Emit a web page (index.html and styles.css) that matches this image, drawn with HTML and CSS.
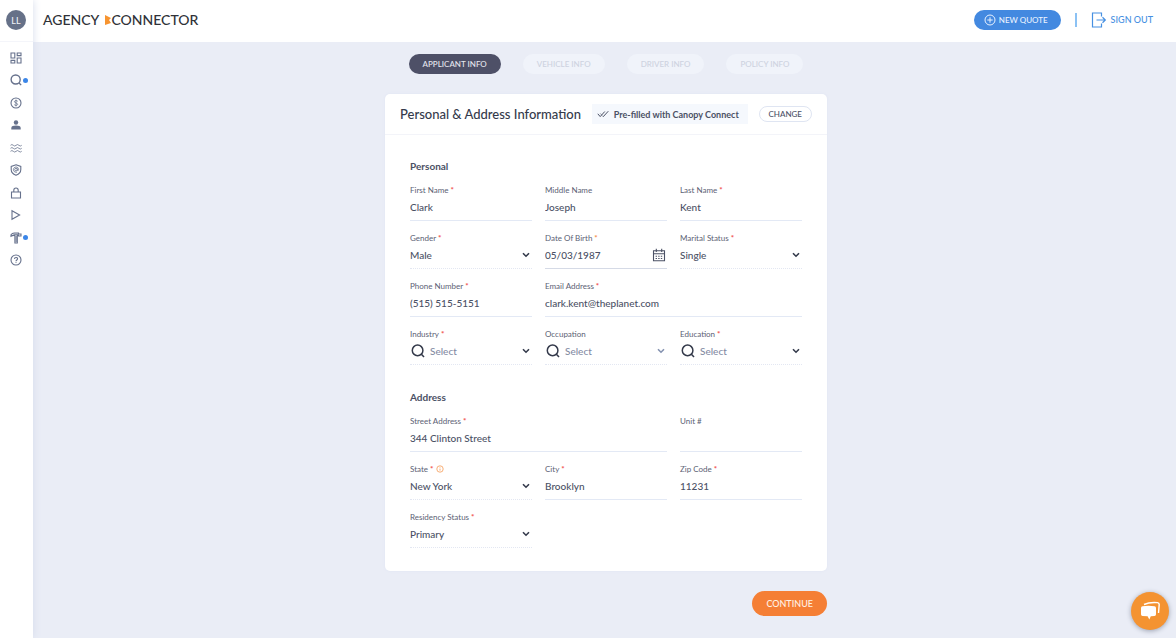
FILE: index.html
```html
<!DOCTYPE html>
<html lang="en">
<head>
<meta charset="utf-8">
<meta name="viewport" content="width=device-width, initial-scale=1">
<title>Agency Connector</title>
<link rel="stylesheet" href="styles.css">
</head>
<body>
<svg class="sprite" aria-hidden="true">
  <symbol id="search" viewBox="0 0 14 14"><circle cx="6.6" cy="6.4" r="5.3"/><path d="M10.4 10.2 13 13"/></symbol>
  <symbol id="chevron" viewBox="0 0 8 6"><path d="M1 1.2 4 4.2 7 1.2"/></symbol>
</svg>
<div class="app">
  <aside class="sidebar">
    <div class="account"><button class="avatar" type="button">LL</button></div>
    <nav class="nav" aria-label="Main">
      <a href="#" aria-label="Dashboard"><svg class="icon" viewBox="0 0 12 12"><path d="M1 1h3.8v5H1zM7.2 1H11v2.6H7.2zM1 8.4h3.8V11H1zM7.2 6H11v5H7.2z"/></svg></a>
      <a href="#" aria-label="Search"><svg class="icon bold"><use href="#search"/></svg><span class="dot"></span></a>
      <a href="#" aria-label="Payments"><svg class="icon" viewBox="0 0 12 12"><circle cx="6" cy="6" r="5"/><path class="thin" d="M7.8 4.4C7.3 3.3 4.4 3.3 4.4 4.7S7.7 5.9 7.7 7.3 4.6 8.7 4.2 7.5M6 2.6v6.8"/></svg></a>
      <a href="#" aria-label="Contacts"><svg class="icon solid" viewBox="0 0 12 12"><circle cx="6" cy="3.5" r="2.2"/><path d="M1.3 10.5V9c0-1.6 2-2.4 4.7-2.4s4.7.8 4.7 2.4v1.5z"/></svg></a>
      <a href="#" aria-label="Flood"><svg class="icon light" viewBox="0 0 12 12"><path d="M.5 3.3q1.4-1.5 2.8 0t2.800 0 2.800 0 2.800 0M.5 6.300q1.400-1.500 2.800 0t2.800 0 2.800 0 2.800 0M.5 9.300q1.400-1.500 2.800 0t2.800 0 2.800 0 2.800 0"/></svg></a>
      <a href="#" aria-label="Coverage"><svg class="icon" viewBox="0 0 12 12"><path d="M6 .8 10.800 2.400v3.200c0 2.700-2 4.700-4.800 5.700-2.800-1-4.800-3-4.800-5.700V2.400z"/><circle class="thin" cx="6" cy="5.600" r="1.300"/><path class="thin" d="M7.300 4.400v1.500c0 1 1.300 1 1.300-.3C8.600 4 7.500 3 6 3S3.400 4.200 3.400 5.700 4.600 8.200 6 8.200h1"/></svg></a>
      <a href="#" aria-label="Security"><svg class="icon" viewBox="0 0 12 12"><path d="M1.500 5h9v6h-9zM3.800 5V3.200a2.200 2.200 0 0 1 4.400 0V5"/></svg></a>
      <a href="#" aria-label="Training"><svg class="icon" viewBox="0 0 12 12"><path d="M2 1.700v8.600L9.600 6z"/></svg></a>
      <a href="#" aria-label="Tools"><svg class="icon" viewBox="0 0 12 12"><path d="M1 2.800C2 1.300 3 1 4.200 1h4.300v1H11v2H8.500v-.6H7.300V11H4.900V3.600C3.500 3.200 2.500 3.300 1 4.300z"/><path d="M3.500 2.200h5M6.100 3.500V10"/></svg><span class="dot"></span></a>
      <a href="#" aria-label="Help"><svg class="icon" viewBox="0 0 12 12"><circle cx="6" cy="6" r="5"/><path d="M4.500 4.900C4.500 3 7.600 3 7.600 4.800 7.600 6 6 5.900 6 7.200M6 8.300v.8"/></svg></a>
    </nav>
  </aside>
  <div class="page">
    <header class="topbar">
      <a class="logo" href="#"><span>AGENCY</span><svg class="logo-mark" viewBox="0 0 6 10"><path d="M0 0 6 3 4 5 6 8 0 10z"/></svg><span>CONNECTOR</span></a>
      <div class="actions">
        <button class="new-quote" type="button"><svg class="plus" viewBox="0 0 12 12"><circle cx="6" cy="6" r="5"/><path d="M6 3.300v5.400M3.300 6h5.400"/></svg>NEW QUOTE</button>
        <span class="divider"></span>
        <a class="sign-out" href="#"><svg viewBox="0 0 16 16"><path d="M10.500 4.500V1H1.500v14h9v-3.500M5.500 8H14M11.500 5.300 14.300 8l-2.800 2.700"/></svg>SIGN OUT</a>
      </div>
    </header>
    <main class="content">
      <ol class="steps">
        <li><button class="step current" type="button" aria-current="step">APPLICANT INFO</button></li>
        <li><button class="step" type="button">VEHICLE INFO</button></li>
        <li><button class="step" type="button">DRIVER INFO</button></li>
        <li><button class="step" type="button">POLICY INFO</button></li>
      </ol>
      <form class="form">
        <div class="card">
          <div class="card-head">
            <h1>Personal &amp; Address Information</h1>
            <div class="prefilled"><svg viewBox="0 0 12 8"><path d="M.8 3.800 3.200 6.600 7.800 1.500M5.400 5.700l.9.900L11.300 1.200M3.400 3.600l1 1"/></svg>Pre-filled with Canopy Connect</div>
            <button class="change" type="button">CHANGE</button>
          </div>
          <div class="card-body">
            <section>
              <h2>Personal</h2>
              <div class="grid">
                <div class="field"><label for="first">First Name <i>*</i></label><div class="control"><input id="first" type="text" value="Clark"></div></div>
                <div class="field"><label for="middle">Middle Name</label><div class="control"><input id="middle" type="text" value="Joseph"></div></div>
                <div class="field"><label for="last">Last Name <i>*</i></label><div class="control"><input id="last" type="text" value="Kent"></div></div>
                <div class="field"><label for="gender">Gender <i>*</i></label><div class="control pick"><select id="gender"><option>Male</option></select><svg class="chevron"><use href="#chevron"/></svg></div></div>
                <div class="field"><label for="dob">Date Of Birth <i class="amber">*</i></label><div class="control date"><input id="dob" type="text" value="05/03/1987"><svg class="calendar" viewBox="0 0 14 14"><path d="M1.500 2.800h11v10h-11zM1.500 5.800h11M4.300.800v3.200M9.700.800v3.200"/><path class="days" d="M3.600 8.200h7M3.600 10.500h7"/></svg></div></div>
                <div class="field"><label for="marital">Marital Status <i>*</i></label><div class="control pick"><select id="marital"><option>Single</option></select><svg class="chevron"><use href="#chevron"/></svg></div></div>
                <div class="field"><label for="phone">Phone Number <i>*</i></label><div class="control"><input id="phone" type="tel" value="(515) 515-5151"></div></div>
                <div class="field wide"><label for="email">Email Address <i>*</i></label><div class="control"><input id="email" type="email" value="clark.kent@theplanet.com"></div></div>
                <div class="field"><label for="industry">Industry <i>*</i></label><div class="control pick empty"><svg class="find"><use href="#search"/></svg><select id="industry"><option>Select</option></select><svg class="chevron"><use href="#chevron"/></svg></div></div>
                <div class="field"><label for="occupation">Occupation</label><div class="control pick empty optional"><svg class="find"><use href="#search"/></svg><select id="occupation"><option>Select</option></select><svg class="chevron"><use href="#chevron"/></svg></div></div>
                <div class="field"><label for="education">Education <i>*</i></label><div class="control pick empty"><svg class="find"><use href="#search"/></svg><select id="education"><option>Select</option></select><svg class="chevron"><use href="#chevron"/></svg></div></div>
              </div>
            </section>
            <section>
              <h2>Address</h2>
              <div class="grid">
                <div class="field wide"><label for="street">Street Address <i>*</i></label><div class="control"><input id="street" type="text" value="344 Clinton Street"></div></div>
                <div class="field"><label for="unit">Unit #</label><div class="control"><input id="unit" type="text"></div></div>
                <div class="field"><label for="state">State <i>*</i> <svg class="info" viewBox="0 0 8 8"><circle cx="4" cy="4" r="3.200"/><path d="M4 3.600v2M4 2.200v.6"/></svg></label><div class="control pick"><select id="state"><option>New York</option></select><svg class="chevron"><use href="#chevron"/></svg></div></div>
                <div class="field"><label for="city">City <i>*</i></label><div class="control"><input id="city" type="text" value="Brooklyn"></div></div>
                <div class="field"><label for="zip">Zip Code <i>*</i></label><div class="control"><input id="zip" type="text" value="11231"></div></div>
                <div class="field"><label for="residency">Residency Status <i>*</i></label><div class="control pick"><select id="residency"><option>Primary</option></select><svg class="chevron"><use href="#chevron"/></svg></div></div>
              </div>
            </section>
          </div>
        </div>
        <button class="continue" type="submit">CONTINUE</button>
      </form>
    </main>
  </div>
</div>
<button class="chat" type="button" aria-label="Chat"><svg viewBox="0 0 22 22"><path class="back" d="M5 4.500C9 2.600 14 2.200 18.500 2.600q1.700.2 1.700 2L19.500 13"/><path d="M3.500 6.200Q9.500 5.400 15.500 6.200 17 6.400 17 8v6.200q0 1.600-1.500 1.800l-3.700.3L10.300 19.500 8.600 16.300 3.500 16Q2 15.800 2 14.200V8Q2 6.400 3.500 6.200z"/></svg></button>
</body>
</html>
```

FILE: styles.css
```css
* { box-sizing: border-box; }

body {
  margin: 0;
  background: #eaedf6;
  color: #4b5165;
  font-family: Lato, "Open Sans", sans-serif;
  font-size: 10px;
  font-weight: 500;
}

button, input, select { font: inherit; color: inherit; }
button { border: 0; padding: 0; cursor: pointer; }
a { color: inherit; text-decoration: none; }
svg { fill: none; stroke: currentColor; flex: none; }
.sprite { position: absolute; width: 0; height: 0; }

.app { display: flex; min-height: 100vh; }

/* Sidebar */
.sidebar {
  width: 33px;
  flex: none;
  background: #fff;
  box-shadow: 0 0 8px #d5dbeb;
  z-index: 1;
}
.account {
  height: 42px;
  padding: 10px 0 0 6px;
  border-bottom: 1px solid #f4f5fa;
}
.avatar {
  width: 20px;
  height: 20px;
  border-radius: 50%;
  background: #667188;
  color: #eef0f6;
  font-size: 9px;
}
.nav {
  display: flex;
  flex-direction: column;
  justify-content: space-between;
  height: 214px;
  margin-top: 10px;
  padding-left: 10px;
  color: #66718c;
}
.nav a { display: flex; align-items: center; gap: 1px; height: 12px; }
.icon { width: 12px; height: 12px; stroke-width: 1.1; }
.icon.bold { stroke-width: 1.6; }
.icon.solid { fill: currentColor; stroke: none; }
.icon.light { stroke-width: 0.8; }
.thin { stroke-width: 0.8; }
.dot { width: 5px; height: 5px; border-radius: 50%; background: #3b86e8; }

/* Top bar */
.page { flex: 1; min-width: 0; }
.topbar {
  display: flex;
  align-items: center;
  justify-content: space-between;
  height: 42px;
  padding: 0 23px 3px 10px;
  background: #fff;
}
.logo { display: flex; align-items: center; color: #303238; font-size: 14px; }
.logo-mark { width: 6px; height: 10px; margin-left: 6px; fill: #f79430; stroke: none; }
.actions { display: flex; align-items: center; gap: 14px; color: #4690e2; }
.new-quote {
  display: flex;
  align-items: center;
  gap: 3px;
  height: 20px;
  padding: 0 13px 0 10px;
  border-radius: 10px;
  background: #4389e0;
  color: #eaf3ff;
  font-size: 8px;
}
.plus { width: 12px; height: 12px; }
.divider { width: 2px; height: 14px; background: #8cc2f4; }
.sign-out { display: flex; align-items: center; gap: 4px; font-size: 9px; }
.sign-out svg { width: 16px; height: 16px; stroke-width: 1.2; }

/* Steps */
.content { padding: 12px 16px 22px 19px; }
.steps {
  display: flex;
  justify-content: center;
  gap: 22px;
  margin: 0 0 20px;
  padding: 0;
  list-style: none;
}
.step {
  display: block;
  height: 20px;
  padding: 0 14px;
  border-radius: 10px;
  background: #f0f3fa;
  color: #cdd2e0;
  font-size: 8px;
}
.step.current { background: #4e5067; color: #e6e7ef; }

/* Form card */
.form { display: flex; flex-direction: column; gap: 20px; max-width: 442px; margin: 0 auto; }
.card { border-radius: 5px; background: #fff; box-shadow: 0 0 3px #e0e5f3; }
.card-head {
  display: flex;
  align-items: center;
  justify-content: space-between;
  height: 41px;
  padding: 0 15px;
  border-bottom: 1px solid #f3f4f9;
  white-space: nowrap;
}
h1 { margin: 0; font-size: 13px; font-weight: 500; color: #343a4b; }
.prefilled {
  display: flex;
  align-items: center;
  gap: 5px;
  height: 20px;
  padding: 0 9px 0 5px;
  background: #f5f8fd;
  font-size: 9px;
  font-weight: 700;
}
.prefilled svg { width: 12px; height: 8px; }
.change {
  height: 16px;
  padding: 0 9px;
  border: 1px solid #dfe5f2;
  border-radius: 8px;
  background: #fff;
  font-size: 8px;
}
.card-body { display: grid; gap: 24px; padding: 23px 25px; }
h2 { margin: 0 0 10px; font-size: 10px; line-height: 16px; font-weight: 700; }
.grid { display: grid; grid-template-columns: repeat(3, minmax(0, 1fr)); gap: 11px 13px; }
.wide { grid-column: span 2; }
label { display: flex; align-items: center; gap: 2px; height: 12px; font-size: 8px; font-weight: 400; color: #5b6174; }
label i { color: #f0504e; font-style: normal; font-weight: 700; }
label .amber { color: #f58a4a; }
.info { width: 8px; height: 8px; margin-left: 1px; color: #f59a55; stroke-width: 0.8; }
.control {
  display: flex;
  align-items: center;
  height: 25px;
  padding-bottom: 2px;
  border-bottom: 1px solid #e3e9f5;
}
.pick { border-bottom-style: dotted; border-bottom-color: #e3e7f2; padding-right: 2px; }
input, select {
  flex: 1;
  min-width: 0;
  width: 100%;
  height: 22px;
  padding: 0;
  border: 0;
  background: none;
  appearance: none;
  outline: 0;
}
.chevron { width: 8px; height: 6px; stroke-width: 1.6; color: #343a4b; }
.find { width: 14px; height: 14px; margin: 0 5px 0 1px; stroke-width: 1.5; color: #343a4b; }
.empty select { color: #848ba3; }
.optional .chevron { color: #8492b0; }
.date { padding-right: 1px; border-bottom-color: #d5dae6; }
.calendar { width: 14px; height: 14px; stroke-width: 1.1; }
.days { stroke-dasharray: 1.4 1.2; }
.continue {
  align-self: flex-end;
  height: 25px;
  padding: 0 14px;
  border-radius: 13px;
  background: #f57f35;
  color: #fff1e5;
  font-size: 9px;
}

/* Chat launcher floats over the page */
.chat {
  position: fixed;
  right: 7px;
  bottom: 8px;
  display: grid;
  place-items: center;
  width: 38px;
  height: 38px;
  border-radius: 50%;
  background: #f49331;
  box-shadow: 0 1px 5px #9aa0b0;
  color: #fff;
}
.chat svg { width: 22px; height: 22px; fill: #fff; stroke: none; }
.chat .back { fill: none; stroke: #fff; stroke-width: 1.4; }
```
